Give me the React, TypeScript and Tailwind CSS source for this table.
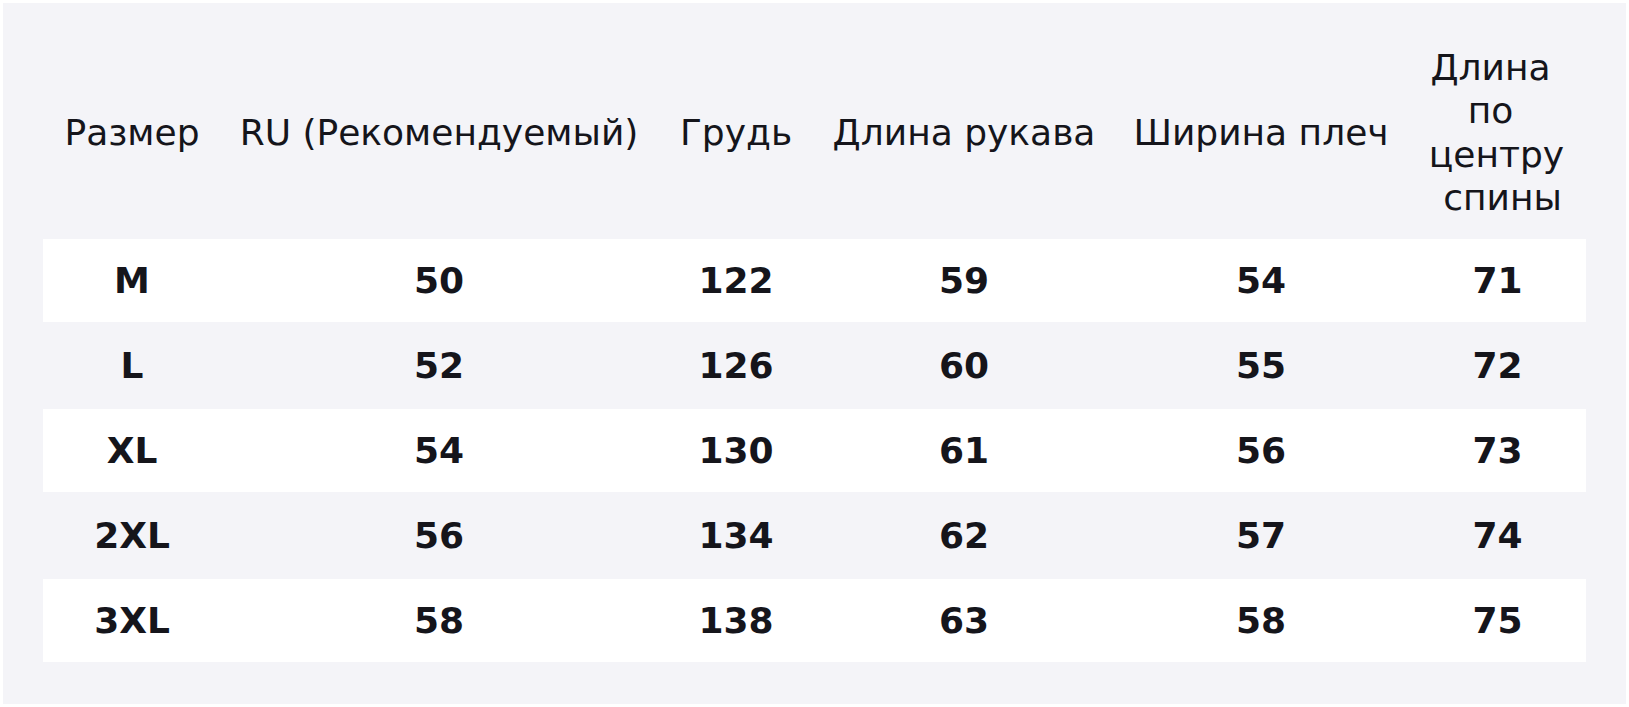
const headers = ["Размер", "RU (Рекомендуемый)", "Грудь", "Длина рукава", "Ширина плеч"];

// last header wraps over four lines, each a little off centre like the original
const lastHeader = [
  { t: "Длина", c: "pr-[14px]" },
  { t: "по", c: "pr-[14px]" },
  { t: "центру", c: "pr-[2px]" },
  { t: "спины", c: "pl-[10px]" },
];

const widths = ["w-[178px]", "w-[436px]", "w-[158px]", "w-[298px]", "w-[296px]", "w-[177px]"];

const rows = [
  ["M", "50", "122", "59", "54", "71"],
  ["L", "52", "126", "60", "55", "72"],
  ["XL", "54", "130", "61", "56", "73"],
  ["2XL", "56", "134", "62", "57", "74"],
  ["3XL", "58", "138", "63", "58", "75"],
];

export default function App() {
  return (
    <div className="min-h-screen bg-white p-[3px] font-['DejaVu_Sans',sans-serif] text-[#15151b]">
      <div className="bg-[#f4f4f8] px-10 pt-10 pb-[42px]">
        <table className="w-full table-fixed border-collapse text-[36px] leading-[1.2]">
          <colgroup>
            {widths.map((w, i) => (
              <col key={i} className={w} />
            ))}
          </colgroup>
          <thead>
            <tr className="h-[196px]">
              {headers.map((h) => (
                <th key={h} className="whitespace-nowrap px-0 pt-[3px] pb-5 text-center align-middle font-normal">
                  {h}
                </th>
              ))}
              <th className="px-0 pt-[3px] pb-5 text-center align-middle font-normal">
                {lastHeader.map((l) => (
                  <span key={l.t} className={`block ${l.c}`}>
                    {l.t}
                  </span>
                ))}
              </th>
            </tr>
          </thead>
          <tbody>
            {rows.map((r, i) => (
              <tr key={r[0]} className={i % 2 === 0 ? "h-[83px] bg-white" : "h-[87px]"}>
                {r.map((c, j) => (
                  <td key={j} className="px-0 text-center align-middle font-bold">
                    {c}
                  </td>
                ))}
              </tr>
            ))}
          </tbody>
        </table>
      </div>
    </div>
  );
}
